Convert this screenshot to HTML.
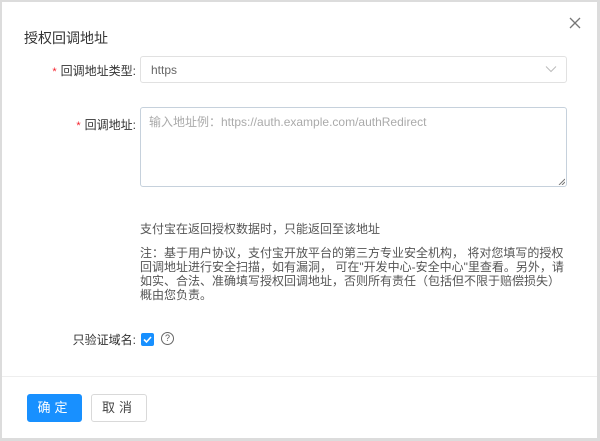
<!DOCTYPE html>
<html><head><meta charset="utf-8"><style>
*{box-sizing:border-box;margin:0;padding:0}
body{width:600px;height:441px;background:#fff;font-family:"Liberation Sans","Noto Sans CJK SC",sans-serif;position:relative;overflow:hidden}
.frame{position:absolute;left:0;top:0;width:600px;height:441px;border:2px solid #dcdcdc;border-right-width:3px;border-bottom-width:3px}
.abs{position:absolute}
.title{left:24px;top:28px;font-size:14px;color:#333}
.close{left:568px;top:16px;width:14px;height:14px}
.lbl{font-size:12px;color:#333;text-align:right}
.req{color:#f5222d;margin-right:4px;font-size:11px}
.sel{left:140px;top:56px;width:427px;height:27px;border:1px solid #e1e1e1;border-radius:3px;font-size:12px;color:#666;padding:6px 10px}
.ta{left:140px;top:107px;width:427px;height:80px;border:1px solid #c6d1dc;border-radius:3px;font-size:12px;color:#aaa;padding:5px 8px}
.help{left:140px;font-size:12px;color:#555;line-height:14px;white-space:nowrap}
.cb{left:141px;top:333px;width:13px;height:13px;background:#1890ff;border-radius:2px}
.q{left:161px;top:332px;width:13px;height:13px;border:1px solid #666;border-radius:50%;font-size:9px;line-height:11px;text-align:center;color:#555}
.div{left:2px;top:376px;width:595px;height:1px;background:#eee}
.btn{top:394px;height:28px;border-radius:3px;font-size:13px;text-align:center;line-height:26px;letter-spacing:4px}
</style></head><body>
<div class="frame"></div>
<div class="abs title">授权回调地址</div>
<svg class="abs close" viewBox="0 0 14 14"><path d="M2 2L12 12M12 2L2 12" stroke="#777" stroke-width="1.3"/></svg>
<div class="abs lbl" style="left:40px;top:62px;width:96px"><span class="req">*</span>回调地址类型:</div>
<div class="abs sel">https</div>
<svg class="abs" style="left:545px;top:65px" width="12" height="8" viewBox="0 0 12 8"><path d="M1 1.5L6 6.5L11 1.5" stroke="#bbb" fill="none"/></svg>
<div class="abs lbl" style="left:40px;top:116px;width:96px"><span class="req">*</span>回调地址:</div>
<div class="abs ta">输入地址例：https://auth.example.com/authRedirect</div>
<svg class="abs" style="left:558px;top:178px" width="7" height="7"><path d="M1 7L7 1M4 7L7 4" stroke="#777"/></svg>
<div class="abs help" style="top:222px">支付宝在返回授权数据时，只能返回至该地址</div>
<div class="abs help" style="top:246px">注：基于用户协议，支付宝开放平台的第三方专业安全机构， 将对您填写的授权<br>回调地址进行安全扫描，如有漏洞， 可在"开发中心-安全中心"里查看。另外，请<br>如实、合法、准确填写授权回调地址，否则所有责任（包括但不限于赔偿损失）<br>概由您负责。</div>
<div class="abs lbl" style="left:40px;top:331px;width:96px">只验证域名:</div>
<div class="abs cb"><svg width="13" height="13"><path d="M3 6.5L5.5 9L10 4" stroke="#fff" stroke-width="1.6" fill="none"/></svg></div>
<div class="abs q">?</div>
<div class="abs div"></div>
<div class="abs btn" style="left:27px;width:55px;background:#1890ff;color:#fff;border:1px solid #1890ff">确定</div>
<div class="abs btn" style="left:91px;width:56px;background:#fff;color:#444;border:1px solid #d9d9d9">取消</div>
</body></html>
